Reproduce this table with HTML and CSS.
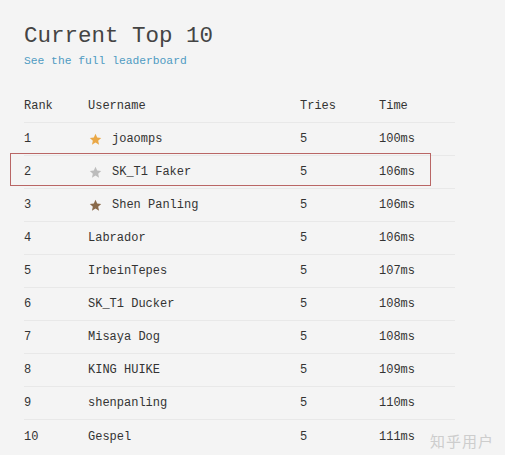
FILE: index.html
```html
<!DOCTYPE html>
<html>
<head>
<meta charset="utf-8">
<link rel="stylesheet" href="styles.css">
</head>
<body>
<div class="page">
  <h1 class="title">Current Top 10</h1>
  <a class="link" href="#">See the full leaderboard</a>
  <div class="board">
    <div class="row head"><span>Rank</span><span>Username</span><span>Tries</span><span>Time</span></div>
    <div class="row"><span>1</span><span class="user"><svg class="star gold" viewBox="0 0 24 24"><path d="M12 1.5l3.1 6.9 7.4.7-5.6 5 1.7 7.4L12 17.6l-6.6 3.9 1.7-7.4-5.6-5 7.4-.7z"/></svg>joaomps</span><span>5</span><span>100ms</span></div>
    <div class="row marked"><span>2</span><span class="user"><svg class="star silver" viewBox="0 0 24 24"><path d="M12 1.5l3.1 6.9 7.4.7-5.6 5 1.7 7.4L12 17.6l-6.6 3.9 1.7-7.4-5.6-5 7.4-.7z"/></svg>SK_T1 Faker</span><span>5</span><span>106ms</span></div>
    <div class="row"><span>3</span><span class="user"><svg class="star bronze" viewBox="0 0 24 24"><path d="M12 1.5l3.1 6.9 7.4.7-5.6 5 1.7 7.4L12 17.6l-6.6 3.9 1.7-7.4-5.6-5 7.4-.7z"/></svg>Shen Panling</span><span>5</span><span>106ms</span></div>
    <div class="row"><span>4</span><span>Labrador</span><span>5</span><span>106ms</span></div>
    <div class="row"><span>5</span><span>IrbeinTepes</span><span>5</span><span>107ms</span></div>
    <div class="row"><span>6</span><span>SK_T1 Ducker</span><span>5</span><span>108ms</span></div>
    <div class="row"><span>7</span><span>Misaya Dog</span><span>5</span><span>108ms</span></div>
    <div class="row"><span>8</span><span>KING HUIKE</span><span>5</span><span>109ms</span></div>
    <div class="row"><span>9</span><span>shenpanling</span><span>5</span><span>110ms</span></div>
    <div class="row last"><span>10</span><span>Gespel</span><span>5</span><span>111ms</span></div>
  </div>
  <div class="watermark">知乎用户</div>
</div>
</body>
</html>
```
FILE: styles.css
```css
html, body {
  margin: 0;
  padding: 0;
  background: #ffffff;
}
.page {
  position: relative;
  width: 505px;
  height: 455px;
  box-sizing: border-box;
  padding: 22px 0 0 24px;
  background: #f4f4f4;
  font-family: "Liberation Mono", "DejaVu Sans Mono", monospace;
  color: #333;
}
.title {
  margin: 0;
  font-weight: normal;
  font-size: 22.5px;
  line-height: 28px;
  color: #444;
}
.link {
  display: block;
  margin-top: 4px;
  font-size: 11.3px;
  line-height: 14px;
  color: #4f9bc2;
  text-decoration: none;
}
.board {
  margin-top: 22px;
  width: 431px;
}
.row {
  display: grid;
  grid-template-columns: 64px 212px 79px 1fr;
  height: 33px;
  align-items: center;
  font-size: 12px;
  border-bottom: 1px solid #e8e8e8;
  box-sizing: border-box;
  position: relative;
}
.row.last {
  border-bottom: none;
}
.user {
  display: flex;
  align-items: center;
}
.star {
  width: 13px;
  height: 13px;
  margin: 0 10px 0 1px;
}
.gold { fill: #eaa846; }
.silver { fill: #bcbcbc; }
.bronze { fill: #8a6a4a; }
.marked::after {
  content: "";
  position: absolute;
  left: -14px;
  top: -3px;
  width: 421px;
  height: 33px;
  border: 1px solid #b96665;
  box-sizing: border-box;
}
.watermark {
  position: absolute;
  left: 430px;
  top: 430px;
  font-family: "Noto Sans CJK SC", sans-serif;
  font-size: 15px;
  color: #cdcdcd;
  letter-spacing: 1px;
}
```
